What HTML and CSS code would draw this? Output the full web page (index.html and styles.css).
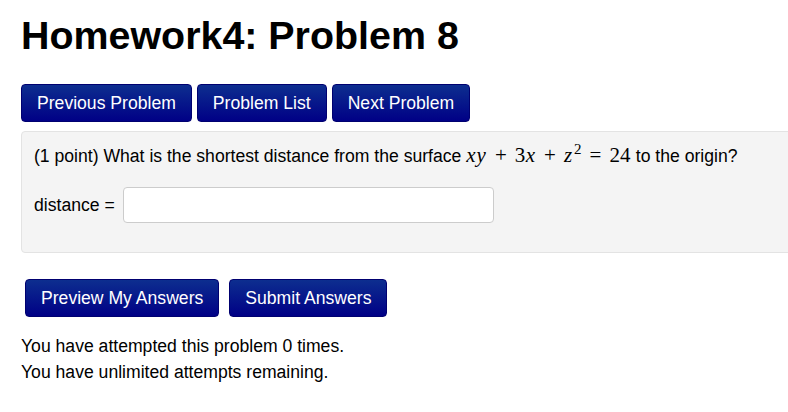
FILE: index.html
```html
<!DOCTYPE html>
<html lang="en">
<head>
<meta charset="utf-8">
<title>Homework4: Problem 8</title>
<link rel="stylesheet" href="styles.css">
</head>
<body>
<main class="page">
  <h1 class="title">Homework4: Problem 8</h1>
  <nav class="nav-buttons">
    <a class="btn" href="#">Previous Problem</a>
    <a class="btn" href="#">Problem List</a>
    <a class="btn" href="#">Next Problem</a>
  </nav>
  <div class="problem-well">
    <p class="question">(1 point) What is the shortest distance from the surface <span class="math"><span class="mi">x</span><span class="mi">y</span><span class="mo bin">+</span><span class="mn">3</span><span class="mi">x</span><span class="mo bin">+</span><span class="mi">z</span><span class="msup">2</span><span class="mo rel">=</span><span class="mn">24</span></span> to the origin?</p>
    <div class="answer-row">
      <label class="answer-label" for="ans">distance =</label>
      <input class="answer-input" id="ans" type="text">
    </div>
  </div>
  <div class="submit-buttons">
    <button class="btn" type="button">Preview My Answers</button>
    <button class="btn" type="button">Submit Answers</button>
  </div>
  <p class="attempts">You have attempted this problem 0 times.<br>You have unlimited attempts remaining.</p>
</main>
</body>
</html>
```
FILE: styles.css
```css
html {
  overflow: hidden;
}

body {
  margin: 0;
  background: #ffffff;
  color: #000000;
  font-family: "Liberation Sans", Arial, sans-serif;
  font-size: 17.6px;
}

.page {
  padding-left: 21px;
}

.title {
  margin: 13px 0 0;
  font-size: 39.4px;
  line-height: 44px;
  font-weight: bold;
}

.nav-buttons {
  display: flex;
  gap: 5px;
  margin-top: 27px;
}

.btn {
  display: inline-flex;
  align-items: center;
  height: 38px;
  box-sizing: border-box;
  padding: 0 15px;
  border: 1px solid #000070;
  border-radius: 4px;
  background: linear-gradient(#0d2e8f, #000086);
  color: #ffffff;
  font-family: "Liberation Sans", Arial, sans-serif;
  font-size: 17.6px;
  text-decoration: none;
  cursor: pointer;
}

.problem-well {
  width: 800px;
  box-sizing: border-box;
  margin-top: 9px;
  padding: 12px 12px 29px;
  background: #f4f4f4;
  border: 1px solid #e3e3e3;
  border-radius: 4px;
}

.question {
  margin: 0;
  line-height: 24px;
}

.math {
  font-family: "Liberation Serif", "Times New Roman", serif;
  font-size: 21px;
  line-height: 0;
  white-space: nowrap;
}

.mi {
  font-style: italic;
  padding-right: 1px;
}

.mn {
  padding-right: 0.5px;
}

.bin {
  margin: 0 8px;
}

.rel {
  margin: 0 8px;
}

.msup {
  font-size: 15px;
  vertical-align: 8px;
  line-height: 0;
  margin-left: 1px;
}

.answer-row {
  display: flex;
  align-items: center;
  gap: 8px;
  margin-top: 19px;
}

.answer-input {
  width: 371px;
  height: 36px;
  box-sizing: border-box;
  margin: 0;
  border: 1px solid #cccccc;
  border-radius: 4px;
  background: #ffffff;
}

.submit-buttons {
  display: flex;
  gap: 10px;
  margin: 26px 0 0 4px;
}

.attempts {
  margin: 17px 0 0;
  line-height: 25.5px;
}
```
